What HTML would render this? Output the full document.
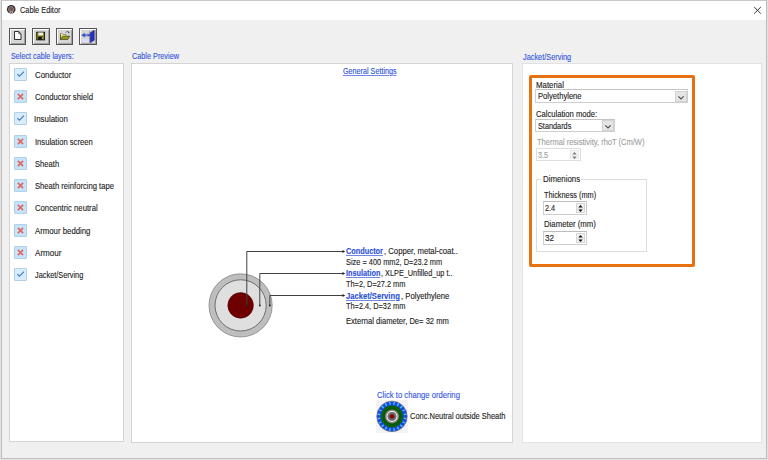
<!DOCTYPE html>
<html><head><meta charset="utf-8">
<style>
*{margin:0;padding:0;box-sizing:border-box}
html,body{width:768px;height:460px;overflow:hidden;background:#f0f0f0}
body{position:relative;font-family:"Liberation Sans",sans-serif;font-size:8.7px;color:#222}
.a{position:absolute}
.t{position:absolute;white-space:nowrap;line-height:10px;height:10px;transform-origin:0 0;transform:scaleX(var(--k,0.88));-webkit-text-stroke:0.12px currentColor}
.win{position:absolute;left:0;top:0;width:768px;height:460px;background:#f0f0f0}
.title{position:absolute;left:2px;top:1px;width:764px;height:19px;background:#fff}
.panel{position:absolute;background:#fff;border:1px solid #d4d4d4}
.lbl{color:#3355dd}
.btn{position:absolute;top:28px;width:17px;height:17px;border:1px solid #555;background:#d6d6d6;box-shadow:inset 1px 1px 0 #fff,inset -1px -1px 0 #a0a0a0}
.cb{position:absolute;left:14px;width:13px;height:13px;border:1px solid #b0d0ea;background:#d8ecfb;border-radius:1px}
.cb.x{background:#c6e4f8}
.link{color:#2a50d8;text-decoration:underline;text-decoration-color:#7088e0}
.b{font-weight:bold;color:#2a50d8}
.g{color:#a0a0a0}
.dd{position:absolute;background:#fff;border:1px solid #cfcfcf;border-top-color:#c4c4c4}
.ddb{position:absolute;background:#e5e5e5;border:1px solid #d2d2d2}
.spin{position:absolute;background:#fff;border:1px solid #cdcdcd;border-top-color:#bdbdbd}
.spb{position:absolute;top:1px;right:1px;bottom:1px;width:9px;background:#f0f0f0;border:1px solid #d6d6d6}
</style></head><body>
<div class="win">
  <!-- window borders -->
  <div class="a" style="left:0;top:0;width:768px;height:1px;background:#c8c8c8"></div>
  <div class="a" style="left:0;top:0;width:1px;height:460px;background:#e2e2e2"></div>
  <div class="a" style="left:1px;top:0;width:1px;height:459px;background:#bcbcbc"></div>
  <div class="a" style="left:766px;top:0;width:1px;height:459px;background:#bcbcbc"></div>
  <div class="a" style="left:767px;top:0;width:1px;height:460px;background:#e2e2e2"></div>
  <div class="a" style="left:1px;top:458px;width:766px;height:1px;background:#c0c0c0"></div>
  <div class="a" style="left:0;top:459px;width:768px;height:1px;background:#e4e4e4"></div>
  <div class="title"></div>
  <!-- title icon -->
  <svg class="a" style="left:6px;top:4px" width="11" height="11" viewBox="0 0 11 11">
    <circle cx="5.2" cy="5.3" r="4.3" fill="#2c2c2c"/>
    <circle cx="5.2" cy="5.3" r="3.1" fill="#8a8a8a"/>
    <path d="M5.2 5.3L2.2 3.2M5.2 5.3L8.2 3.2M5.2 5.3V8.8" stroke="#3a3a3a" stroke-width="0.9"/>
    <circle cx="5.2" cy="3.6" r="0.95" fill="#b04a4a"/>
    <circle cx="3.7" cy="6.1" r="0.95" fill="#b04a4a"/>
    <circle cx="6.7" cy="6.1" r="0.95" fill="#b04a4a"/>
    <path d="M3.5 8.6L5.2 7.6L6.9 8.6" stroke="#e0e0e0" stroke-width="0.8" fill="none"/>
  </svg>
  
  <!-- close X -->
  <svg class="a" style="left:753px;top:6px" width="9" height="9" viewBox="0 0 9 9">
    <path d="M1.2 1L7.8 7.6M7.8 1L1.2 7.6" stroke="#2e2e2e" stroke-width="1"/>
  </svg>

  <!-- toolbar -->
  <div class="btn" style="left:9px"><svg class="a" style="left:0;top:0" width="15" height="15" viewBox="0 0 15 15">
    <path d="M4.5 2.5H8.7L11 4.8V10.5H4.5Z" fill="#fff" stroke="#1a1a1a" stroke-width="0.9"/><path d="M8.7 2.5V4.8H11" fill="none" stroke="#333" stroke-width="0.7"/></svg></div>
  <div class="btn" style="left:32px;width:18px"><svg class="a" style="left:0;top:0" width="15" height="15" viewBox="0 0 15 15">
    <rect x="3.7" y="3.2" width="7.9" height="7.7" fill="#8a8a12" stroke="#151515" stroke-width="0.9"/><rect x="5.3" y="3.5" width="4.8" height="2.9" fill="#ececec"/><rect x="5.1" y="7.7" width="5" height="3" fill="#111"/><rect x="8.9" y="8.3" width="1" height="1.8" fill="#ccc"/></svg></div>
  <div class="btn" style="left:56px"><svg class="a" style="left:0;top:0" width="15" height="15" viewBox="0 0 15 15">
    <path d="M3.5 10.5V4.5H5L6 5.5H9V7" fill="#eeee70" stroke="#555" stroke-width="0.5"/><path d="M3.5 5.5V10.5H10.8L12.8 7.2H5.6L3.5 10.5" fill="#9a9a08" stroke="#2a2a2a" stroke-width="0.6"/><path d="M8.6 3.4Q10.2 1.4 12 3.2" fill="none" stroke="#444" stroke-width="0.7"/><path d="M11.2 2.4L12.7 3.4L11.3 4.3Z" fill="#222"/></svg></div>
  <div class="btn" style="left:79px;width:18px"><svg class="a" style="left:0;top:0" width="16" height="15" viewBox="0 0 16 15">
    <rect x="2.5" y="10.5" width="7" height="2.5" fill="#dcdcf8"/><path d="M9.6 2V13.5" stroke="#9a9a9a" stroke-width="1"/><path d="M10.3 3.8L14.2 1.2V11.2L10.3 13.6Z" fill="#2630c0" stroke="#18208a" stroke-width="0.6"/><path d="M1.8 6.2L4.6 4.3V5.4H9.4V7H4.6V8.1Z" fill="#3050e0" stroke="#1a2a90" stroke-width="0.4"/><rect x="4.8" y="5.6" width="3" height="1.1" fill="#80a0ff"/></svg></div>

  <!-- labels -->
  
  
  

  <!-- panels -->
  <div class="panel" style="left:9px;top:63px;width:115px;height:379px"></div>
  <div class="panel" style="left:131px;top:63px;width:382px;height:380px"></div>
  <div class="panel" style="left:522px;top:63px;width:240px;height:380px;border-color:#e2e2e2"></div>

  <!-- left list -->
  <div class="cb" style="top:68px"><svg width="11" height="11" viewBox="0 0 11 11" style="position:absolute;left:0;top:0"><path d="M2.3 5.2L4.4 7.2L9 2.7" fill="none" stroke="#3f7cc8" stroke-width="1.15"/></svg></div>
  <div class="cb x" style="top:90px"><svg width="11" height="11" viewBox="0 0 11 11" style="position:absolute;left:0;top:0"><path d="M2.9 2.9L8.1 8.1M8.1 2.9L2.9 8.1" stroke="#e46464" stroke-width="1.6"/></svg></div>
  <div class="cb" style="top:112px"><svg width="11" height="11" viewBox="0 0 11 11" style="position:absolute;left:0;top:0"><path d="M2.3 5.2L4.4 7.2L9 2.7" fill="none" stroke="#3f7cc8" stroke-width="1.15"/></svg></div>
  <div class="cb x" style="top:135px"><svg width="11" height="11" viewBox="0 0 11 11" style="position:absolute;left:0;top:0"><path d="M2.9 2.9L8.1 8.1M8.1 2.9L2.9 8.1" stroke="#e46464" stroke-width="1.6"/></svg></div>
  <div class="cb x" style="top:157px"><svg width="11" height="11" viewBox="0 0 11 11" style="position:absolute;left:0;top:0"><path d="M2.9 2.9L8.1 8.1M8.1 2.9L2.9 8.1" stroke="#e46464" stroke-width="1.6"/></svg></div>
  <div class="cb x" style="top:179px"><svg width="11" height="11" viewBox="0 0 11 11" style="position:absolute;left:0;top:0"><path d="M2.9 2.9L8.1 8.1M8.1 2.9L2.9 8.1" stroke="#e46464" stroke-width="1.6"/></svg></div>
  <div class="cb x" style="top:201px"><svg width="11" height="11" viewBox="0 0 11 11" style="position:absolute;left:0;top:0"><path d="M2.9 2.9L8.1 8.1M8.1 2.9L2.9 8.1" stroke="#e46464" stroke-width="1.6"/></svg></div>
  <div class="cb x" style="top:224px"><svg width="11" height="11" viewBox="0 0 11 11" style="position:absolute;left:0;top:0"><path d="M2.9 2.9L8.1 8.1M8.1 2.9L2.9 8.1" stroke="#e46464" stroke-width="1.6"/></svg></div>
  <div class="cb x" style="top:246px"><svg width="11" height="11" viewBox="0 0 11 11" style="position:absolute;left:0;top:0"><path d="M2.9 2.9L8.1 8.1M8.1 2.9L2.9 8.1" stroke="#e46464" stroke-width="1.6"/></svg></div>
  <div class="cb" style="top:268px"><svg width="11" height="11" viewBox="0 0 11 11" style="position:absolute;left:0;top:0"><path d="M2.3 5.2L4.4 7.2L9 2.7" fill="none" stroke="#3f7cc8" stroke-width="1.15"/></svg></div>

  <!-- cable drawing -->
  <svg class="a" style="left:200px;top:240px" width="150" height="105" viewBox="0 0 150 105">
    <circle cx="40.6" cy="65.4" r="31.6" fill="#bebebe" stroke="#777" stroke-width="0.7"/>
    <circle cx="40.6" cy="65.4" r="25.6" fill="#dfdfdf" stroke="#555" stroke-width="0.8"/>
    <circle cx="40.6" cy="65.4" r="12.8" fill="#6e0000" stroke="#500000" stroke-width="0.5"/>
    <path d="M46.8 65.5V11.5H143" fill="none" stroke="#404040" stroke-width="1"/>
    <path d="M59.8 65.5V33.5H143" fill="none" stroke="#404040" stroke-width="1"/>
    <path d="M69.8 66V55.5H143" fill="none" stroke="#404040" stroke-width="1"/>
    <circle cx="46.8" cy="65.5" r="0.9" fill="#222"/>
    <circle cx="59.8" cy="65.5" r="0.9" fill="#222"/>
    <circle cx="69.8" cy="65.5" r="0.9" fill="#222"/>
    <path d="M142.5 10L145.2 11.5L142.5 13Z" fill="#222"/>
    <path d="M142.5 32L145.2 33.5L142.5 35Z" fill="#222"/>
    <path d="M142.5 54L145.2 55.5L142.5 57Z" fill="#222"/>
  </svg>
  <!-- preview -->
  

  
  
  
  
  
  
  

  
  <svg class="a" style="left:376px;top:400px" width="32" height="33" viewBox="0 0 32 33">
    <rect x="0" y="0" width="32" height="33" fill="#f3f3f3"/>
    <g transform="translate(0,0.4)">
    <circle cx="16" cy="16" r="15.2" fill="#1848e4" stroke="#707070" stroke-width="0.7"/>
    <path d="M27.65 17.85L30.42 18.28" stroke="#50c8f8" stroke-width="1.3"/><path d="M26.51 21.36L29.01 22.63" stroke="#50c8f8" stroke-width="1.3"/><path d="M24.34 24.34L26.32 26.32" stroke="#50c8f8" stroke-width="1.3"/><path d="M21.36 26.51L22.63 29.01" stroke="#50c8f8" stroke-width="1.3"/><path d="M17.85 27.65L18.28 30.42" stroke="#50c8f8" stroke-width="1.3"/><path d="M14.15 27.65L13.72 30.42" stroke="#50c8f8" stroke-width="1.3"/><path d="M10.64 26.51L9.37 29.01" stroke="#50c8f8" stroke-width="1.3"/><path d="M7.66 24.34L5.68 26.32" stroke="#50c8f8" stroke-width="1.3"/><path d="M5.49 21.36L2.99 22.63" stroke="#50c8f8" stroke-width="1.3"/><path d="M4.35 17.85L1.58 18.28" stroke="#50c8f8" stroke-width="1.3"/><path d="M4.35 14.15L1.58 13.72" stroke="#50c8f8" stroke-width="1.3"/><path d="M5.49 10.64L2.99 9.37" stroke="#50c8f8" stroke-width="1.3"/><path d="M7.66 7.66L5.68 5.68" stroke="#50c8f8" stroke-width="1.3"/><path d="M10.64 5.49L9.37 2.99" stroke="#50c8f8" stroke-width="1.3"/><path d="M14.15 4.35L13.72 1.58" stroke="#50c8f8" stroke-width="1.3"/><path d="M17.85 4.35L18.28 1.58" stroke="#50c8f8" stroke-width="1.3"/><path d="M21.36 5.49L22.63 2.99" stroke="#50c8f8" stroke-width="1.3"/><path d="M24.34 7.66L26.32 5.68" stroke="#50c8f8" stroke-width="1.3"/><path d="M26.51 10.64L29.01 9.37" stroke="#50c8f8" stroke-width="1.3"/><path d="M27.65 14.15L30.42 13.72" stroke="#50c8f8" stroke-width="1.3"/>
    <circle cx="16" cy="16" r="10.7" fill="#0a5a0a"/>
    <circle cx="26.14" cy="17.79" r="1.2" fill="#0f660f"/><circle cx="24.92" cy="21.15" r="1.2" fill="#0f660f"/><circle cx="22.62" cy="23.89" r="1.2" fill="#0f660f"/><circle cx="19.52" cy="25.68" r="1.2" fill="#0f660f"/><circle cx="16.00" cy="26.30" r="1.2" fill="#0f660f"/><circle cx="12.48" cy="25.68" r="1.2" fill="#0f660f"/><circle cx="9.38" cy="23.89" r="1.2" fill="#0f660f"/><circle cx="7.08" cy="21.15" r="1.2" fill="#0f660f"/><circle cx="5.86" cy="17.79" r="1.2" fill="#0f660f"/><circle cx="5.86" cy="14.21" r="1.2" fill="#0f660f"/><circle cx="7.08" cy="10.85" r="1.2" fill="#0f660f"/><circle cx="9.38" cy="8.11" r="1.2" fill="#0f660f"/><circle cx="12.48" cy="6.32" r="1.2" fill="#0f660f"/><circle cx="16.00" cy="5.70" r="1.2" fill="#0f660f"/><circle cx="19.52" cy="6.32" r="1.2" fill="#0f660f"/><circle cx="22.62" cy="8.11" r="1.2" fill="#0f660f"/><circle cx="24.92" cy="10.85" r="1.2" fill="#0f660f"/><circle cx="26.14" cy="14.21" r="1.2" fill="#0f660f"/>
    <circle cx="16" cy="16" r="7" fill="#858585"/>
    <circle cx="16" cy="16" r="5" fill="none" stroke="#f4f4f4" stroke-width="1.1"/>
    <circle cx="16" cy="16" r="4.3" fill="#6c6c6c"/>
    <circle cx="16" cy="16" r="2.2" fill="#8a0000"/>
    </g>
  </svg>
  

  <!-- right panel -->
  <div class="a" style="left:529px;top:75px;width:166px;height:192px;border:3px solid #e8720f;border-radius:2px"></div>
  <div class="dd" style="left:535px;top:89px;width:153px;height:14px"><div class="ddb" style="top:1px;bottom:0;right:0;width:12px"><svg width="11" height="11" viewBox="0 0 11 11" style="position:absolute;left:0;top:0"><path d="M2.3 4.3L5 7L7.7 4.3" fill="none" stroke="#505050" stroke-width="1.2"/></svg></div></div>
  <div class="dd" style="left:535px;top:119px;width:80px;height:13px"><div class="ddb" style="top:0;bottom:0;right:0;width:12px"><svg width="11" height="11" viewBox="0 0 11 11" style="position:absolute;left:0;top:0"><path d="M2.3 4.3L5 7L7.7 4.3" fill="none" stroke="#505050" stroke-width="1.2"/></svg></div></div>
  <div class="spin" style="left:536px;top:148px;width:45px;height:13px;border-color:#dedede"><div class="spb" style="opacity:.55"><svg width="7" height="9" viewBox="0 0 7 9" style="position:absolute;left:0;top:0"><path d="M0 4.5H7" stroke="#dcdcdc" stroke-width="0.6"/><path d="M1.3 3.4L3.5 1.1L5.7 3.4Z M1.3 5.6L3.5 7.9L5.7 5.6Z" fill="#111"/></svg></div></div>
  <div class="a" style="left:536px;top:179px;width:111px;height:73px;border:1px solid #dcdcdc"></div>
  <div class="a" style="left:541px;top:175px;width:40px;height:8px;background:#fff"></div>
  <div class="spin" style="left:543px;top:201px;width:44px;height:14px"><div class="spb"><svg width="7" height="9" viewBox="0 0 7 9" style="position:absolute;left:0;top:0"><path d="M0 4.5H7" stroke="#dcdcdc" stroke-width="0.6"/><path d="M1.3 3.4L3.5 1.1L5.7 3.4Z M1.3 5.6L3.5 7.9L5.7 5.6Z" fill="#111"/></svg></div></div>
  <div class="spin" style="left:543px;top:231px;width:44px;height:14px"><div class="spb"><svg width="7" height="9" viewBox="0 0 7 9" style="position:absolute;left:0;top:0"><path d="M0 4.5H7" stroke="#dcdcdc" stroke-width="0.6"/><path d="M1.3 3.4L3.5 1.1L5.7 3.4Z M1.3 5.6L3.5 7.9L5.7 5.6Z" fill="#111"/></svg></div></div>
<div class="t" style="left:20px;top:5px;--k:0.846">Cable Editor</div>
  <div class="t lbl" style="left:11px;top:51px;--k:0.832">Select cable layers:</div>
  <div class="t lbl" style="left:132px;top:51px;--k:0.838">Cable Preview</div>
  <div class="t lbl" style="left:523px;top:52px;--k:0.846">Jacket/Serving</div>
  <div class="t" style="left:35px;top:70px;--k:0.905">Conductor</div>
  <div class="t" style="left:35px;top:92px;--k:0.891">Conductor shield</div>
  <div class="t" style="left:34px;top:114px;--k:0.911">Insulation</div>
  <div class="t" style="left:35px;top:137px;--k:0.878">Insulation screen</div>
  <div class="t" style="left:35px;top:159px;--k:0.877">Sheath</div>
  <div class="t" style="left:35px;top:181px;--k:0.879">Sheath reinforcing tape</div>
  <div class="t" style="left:35px;top:203px;--k:0.889">Concentric neutral</div>
  <div class="t" style="left:35px;top:226px;--k:0.897">Armour bedding</div>
  <div class="t" style="left:35px;top:248px;--k:0.929">Armour</div>
  <div class="t" style="left:35px;top:270px;--k:0.847">Jacket/Serving</div>
  <div class="t link" style="left:343px;top:66px;--k:0.828">General Settings</div>
  <div class="t link b" style="left:346px;top:246px;--k:0.841">Conductor</div>
  <div class="t" style="left:384px;top:246px;--k:0.889">, Copper, metal-coat..</div>
  <div class="t" style="left:346px;top:257px;--k:0.851">Size = 400 mm2, D=23.2 mm</div>
  <div class="t link b" style="left:346px;top:268px;--k:0.837">Insulation</div>
  <div class="t" style="left:381px;top:268px;--k:0.842">, XLPE_Unfilled_up t..</div>
  <div class="t" style="left:346px;top:279px;--k:0.847">Th=2, D=27.2 mm</div>
  <div class="t link b" style="left:346px;top:291px;--k:0.877">Jacket/Serving</div>
  <div class="t" style="left:401px;top:291px;--k:0.885">, Polyethylene</div>
  <div class="t" style="left:346px;top:301px;--k:0.847">Th=2.4, D=32 mm</div>
  <div class="t" style="left:346px;top:316px;--k:0.875">External diameter, De= 32 mm</div>
  <div class="t lbl" style="left:377px;top:390px;--k:0.885">Click to change ordering</div>
  <div class="t" style="left:410px;top:411px;--k:0.859">Conc.Neutral outside Sheath</div>
  <div class="t" style="left:536px;top:80px;--k:0.903">Material</div>
  <div class="t" style="left:538px;top:91px;--k:0.876">Polyethylene</div>
  <div class="t" style="left:536px;top:109px;--k:0.880">Calculation mode:</div>
  <div class="t" style="left:538px;top:121px;--k:0.841">Standards</div>
  <div class="t g" style="left:537px;top:137px;--k:0.865">Thermal resistivity, rhoT (Cm/W)</div>
  <div class="t g" style="left:538px;top:150px;--k:0.825">3.5</div>
  <div class="t" style="left:543px;top:174px;--k:0.905">Dimenions</div>
  <div class="t" style="left:544px;top:190px;--k:0.844">Thickness (mm)</div>
  <div class="t" style="left:545px;top:203px;--k:0.842">2.4</div>
  <div class="t" style="left:544px;top:219px;--k:0.895">Diameter (mm)</div>
  <div class="t" style="left:545px;top:233px;--k:0.944">32</div>
</div>
</body></html>
